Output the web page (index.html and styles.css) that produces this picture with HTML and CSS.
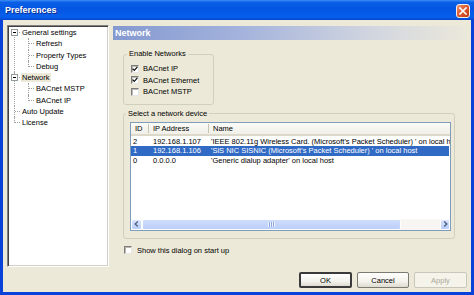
FILE: index.html
```html
<!DOCTYPE html>
<html lang="en">
<head>
  <meta charset="UTF-8" />
  <title>Preferences</title>
  <link rel="stylesheet" href="styles.css">
</head>
<body>
  <div class="window">
    <div class="titlebar">
      <span class="title">Preferences</span>
      <span class="close" aria-label="Close">
        <svg width="8" height="8" viewBox="0 0 8 8"><path d="M1 1L7 7M7 1L1 7" stroke="#fff" stroke-width="1.6" stroke-linecap="square"/></svg>
      </span>
    </div>

    <div class="body">
      <div class="main">
        <div class="tree">
          <ul class="root">
            <li class="first"><span class="toggle"></span>General settings
              <ul>
                <li>Refresh</li>
                <li>Property Types</li>
                <li class="last">Debug</li>
              </ul>
            </li>
            <li><span class="toggle"></span><span class="sel">Network</span>
              <ul>
                <li>BACnet MSTP</li>
                <li class="last">BACnet IP</li>
              </ul>
            </li>
            <li>Auto Update</li>
            <li class="last">License</li>
          </ul>
        </div>

        <div class="panel">
          <div class="panel-head">Network</div>

          <fieldset class="group group-enable">
            <legend>Enable Networks</legend>
            <label class="check"><span class="box"><svg width="6" height="6" viewBox="0 0 6 6"><path d="M0.6 2.6L2.3 4.4L5.4 0.9" fill="none" stroke="#111" stroke-width="1.3"/></svg></span>BACnet IP</label>
            <label class="check"><span class="box"><svg width="6" height="6" viewBox="0 0 6 6"><path d="M0.6 2.6L2.3 4.4L5.4 0.9" fill="none" stroke="#111" stroke-width="1.3"/></svg></span>BACnet Ethernet</label>
            <label class="check"><span class="box"></span>BACnet MSTP</label>
          </fieldset>

          <fieldset class="group group-device">
            <legend>Select a network device</legend>
            <div class="listview">
              <div class="lv-head">
                <span class="h-id">ID</span>
                <span class="h-ip">IP Address</span>
                <span class="h-name">Name</span>
              </div>
              <div class="lv-body">
                <div class="lv-row">
                  <span class="c-id">2</span>
                  <span class="c-ip">192.168.1.107</span>
                  <span class="c-name">'IEEE 802.11g Wireless Card. (Microsoft's Packet Scheduler) ' on local host</span>
                </div>
                <div class="lv-row selected">
                  <span class="c-id">1</span>
                  <span class="c-ip">192.168.1.106</span>
                  <span class="c-name">'SiS NIC SISNIC (Microsoft's Packet Scheduler) ' on local host</span>
                </div>
                <div class="lv-row">
                  <span class="c-id">0</span>
                  <span class="c-ip">0.0.0.0</span>
                  <span class="c-name">'Generic dialup adapter' on local host</span>
                </div>
              </div>
              <div class="hscroll">
                <span class="sb-btn"><svg width="5" height="6" viewBox="0 0 5 6"><path d="M3.8 0.6L1.2 3L3.8 5.4" fill="none" stroke="#4d6185" stroke-width="1.4"/></svg></span>
                <span class="sb-thumb"><span class="grip"></span></span>
                <span class="sb-track"></span>
                <span class="sb-btn"><svg width="5" height="6" viewBox="0 0 5 6"><path d="M1.2 0.6L3.8 3L1.2 5.4" fill="none" stroke="#4d6185" stroke-width="1.4"/></svg></span>
              </div>
            </div>
          </fieldset>

          <label class="check startup"><span class="box"></span>Show this dialog on start up</label>
        </div>
      </div>

      <div class="buttons">
        <button class="btn default">OK</button>
        <button class="btn">Cancel</button>
        <button class="btn" disabled>Apply</button>
      </div>
    </div>
  </div>
</body>
</html>
```

FILE: styles.css
```css
body {
  margin: 0;
  font-family: "Liberation Sans", Arial, sans-serif;
  font-size: 7.5px;
  color: #000;
  background: #fff;
}

.window {
  width: 474px;
  height: 295px;
  display: flex;
  flex-direction: column;
  background: #0842d8;
}

.titlebar {
  height: 20px;
  flex: none;
  display: flex;
  align-items: center;
  justify-content: space-between;
  padding: 0 4px 0 5px;
  background: linear-gradient(to bottom, #3d8cf4 0%, #0a5fe6 12%, #0456e2 45%, #0660ec 85%, #0446cf 100%);
  color: #fff;
}

.title {
  font-weight: bold;
  font-size: 9px;
  text-shadow: 1px 1px 0 #0b2a8a;
}

.close {
  width: 14px;
  height: 14px;
  box-sizing: border-box;
  margin-top: 2px;
  display: flex;
  align-items: center;
  justify-content: center;
  border: 1px solid #f2efe8;
  border-radius: 3px;
  background: linear-gradient(135deg, #ec9a78 0%, #dd5a2f 45%, #c23d16 100%);
}

.body {
  flex: 1;
  margin: 0 3px 3px 3px;
  padding: 5px 4px 4px 4px;
  background: #ece9d8;
  display: flex;
  flex-direction: column;
  min-height: 0;
}

.main {
  flex: 1;
  display: flex;
  min-height: 0;
}

/* tree */

.tree {
  width: 102px;
  flex: none;
  box-sizing: border-box;
  background: #fff;
  border: 1px solid;
  border-color: #808080 #fff #fff #808080;
  box-shadow: inset 1px 1px 0 #404040, inset -1px -1px 0 #d4d0c8;
  padding: 1px 0 0 1px;
}

.tree ul {
  list-style: none;
  margin: 0;
  padding: 0;
}

.tree ul ul {
  margin-left: 1px;
}

.tree li {
  position: relative;
  padding-left: 13px;
  line-height: 11.3px;
  white-space: nowrap;
}

.tree li::before {
  content: "";
  position: absolute;
  left: 6px;
  top: 5px;
  width: 5px;
  border-top: 1px dotted #a0a0a0;
}

.tree li::after {
  content: "";
  position: absolute;
  left: 5px;
  top: 0;
  bottom: 0;
  border-left: 1px dotted #a0a0a0;
}

.tree li.last::after {
  bottom: auto;
  height: 6px;
}

.tree li.first::after {
  top: 6px;
}

.toggle {
  position: absolute;
  left: 2px;
  top: 2px;
  width: 7px;
  height: 7px;
  box-sizing: border-box;
  border: 1px solid #919b9c;
  background: #fff;
  z-index: 1;
}

.toggle::after {
  content: "";
  position: absolute;
  left: 1px;
  top: 2px;
  width: 3px;
  border-top: 1px solid #000;
}

.sel {
  background: #ece9d8;
  padding: 0 1px;
  margin-left: -1px;
}

/* right panel */

.panel {
  flex: 1;
  margin-left: 4px;
  display: flex;
  flex-direction: column;
  min-width: 0;
}

.panel-head {
  margin-top: 1px;
  height: 14px;
  line-height: 14px;
  padding-left: 2px;
  font-size: 9px;
  font-weight: bold;
  color: #fff;
  background: linear-gradient(to right, #8499d0 0%, #a3b2dc 35%, #d3d7df 75%, #ebe8db 100%);
}

.group {
  margin: 0;
  min-width: 0;
  border: 1px solid #d0d0bf;
  border-radius: 3px;
  box-sizing: border-box;
}

.group legend {
  padding: 0 2px;
  margin-left: -4px;
  line-height: 10px;
}

.group-enable {
  margin: 9px 0 0 10px;
  width: 91px;
  padding: 4px 0 6px 7px;
}

.group-device {
  margin: 4px 12px 0 10px;
  padding: 3px 3px 7px 6px;
}

.check {
  display: flex;
  align-items: center;
  height: 11.5px;
  white-space: nowrap;
}

.box {
  width: 8px;
  height: 8px;
  box-sizing: border-box;
  flex: none;
  margin-right: 4px;
  display: flex;
  align-items: center;
  justify-content: center;
  background: #fff;
  border: 1px solid;
  border-color: #7d7d7d #e6e6e6 #e6e6e6 #7d7d7d;
  box-shadow: inset 1px 1px 0 #b9b9b0;
}

.startup {
  margin: 6px 0 0 11px;
}

.startup .box {
  margin-right: 5px;
}

/* list view */

.listview {
  height: 109px;
  min-width: 0;
  box-sizing: border-box;
  border: 1px solid #7f9db9;
  background: #fff;
  display: flex;
  flex-direction: column;
  overflow: hidden;
}

.lv-head {
  height: 13px;
  flex: none;
  box-sizing: border-box;
  display: flex;
  align-items: center;
  background: linear-gradient(to bottom, #fbfbf8, #f0efe8);
  border-bottom: 2px solid #dcd9cb;
}

.lv-head span {
  box-sizing: border-box;
  padding-left: 4px;
  border-right: 1px solid #c7c5b2;
  line-height: 9px;
}

.h-id { width: 18px; }
.h-ip { width: 60px; }
.h-name { flex: 1; border-right: none !important; }

.lv-body {
  flex: 1;
  padding-top: 1px;
  overflow: hidden;
}

.lv-row {
  display: flex;
  height: 9.7px;
  line-height: 9.7px;
  white-space: nowrap;
}

.lv-row.selected {
  background: #316ac5;
  color: #fff;
  margin-right: 1px;
}

.c-id { width: 18px; flex: none; padding-left: 2px; box-sizing: border-box; }
.c-ip { width: 60px; flex: none; padding-left: 4px; box-sizing: border-box; }
.c-name { flex: none; padding-left: 2px; }

.hscroll {
  height: 11px;
  flex: none;
  display: flex;
  background: #f7f6f2;
}

.sb-btn {
  width: 11px;
  flex: none;
  box-sizing: border-box;
  display: flex;
  align-items: center;
  justify-content: center;
  border: 1px solid #fff;
  border-radius: 2px;
  background: linear-gradient(to bottom, #dbe5fd, #b9cdf9);
}

.sb-btn:last-child {
  width: 10px;
}

.sb-thumb {
  width: 259px;
  flex: none;
  box-sizing: border-box;
  display: flex;
  align-items: center;
  justify-content: center;
  border: 1px solid #fff;
  border-radius: 2px;
  background: linear-gradient(to bottom, #cfdcfc, #bccff9);
}

.grip {
  width: 7px;
  height: 5px;
  background: repeating-linear-gradient(to right, #eef3fe 0 1px, #8ca6e6 1px 2px);
}

.sb-track {
  flex: 1;
}

/* buttons */

.buttons {
  height: 16px;
  flex: none;
  margin-top: 5px;
  display: flex;
  justify-content: flex-end;
  gap: 5px;
}

.btn {
  width: 53px;
  height: 16px;
  padding: 0;
  font-family: "Liberation Sans", Arial, sans-serif;
  font-size: 7.5px;
  color: #000;
  border: 1px solid #7b7b72;
  border-radius: 2px;
  background: linear-gradient(to bottom, #ffffff 0%, #f3f2ec 60%, #dedbd0 100%);
}

.btn.default {
  border: 2px solid #3a3a3a;
}

.btn + .btn {
  width: 52px;
}

.btn:last-child {
  width: 53px;
}

.btn:disabled {
  color: #aca899;
  border-color: #c9c7ba;
  background: #f5f4ea;
}
```
